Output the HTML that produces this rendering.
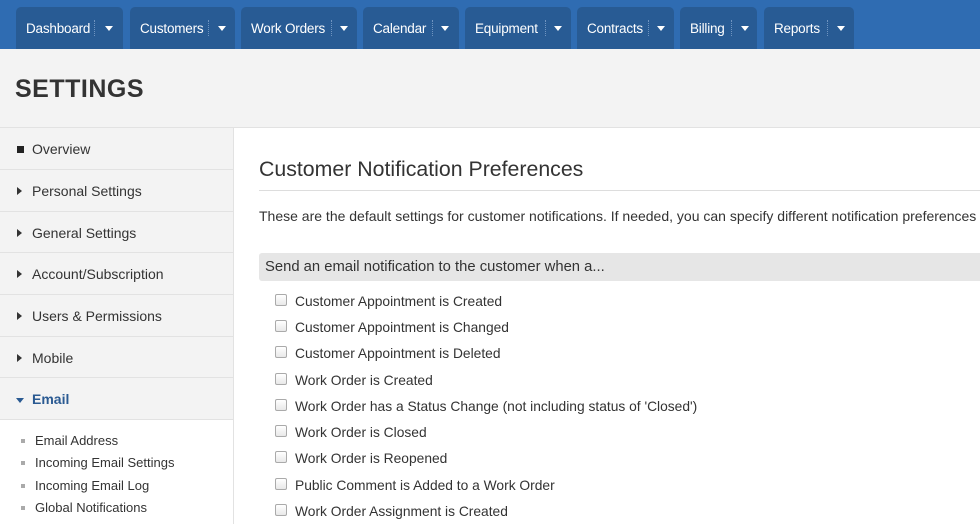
<!DOCTYPE html>
<html><head><style>
*{margin:0;padding:0;box-sizing:border-box}
body{width:980px;height:524px;overflow:hidden;font-family:"Liberation Sans",sans-serif;color:#333;background:#fff;position:relative}
.nav{position:absolute;left:0;top:0;width:980px;height:49px;background:#2f6cb2}
.tab{position:absolute;top:7px;height:42px;background:#285b94;border-radius:5px 5px 0 0;color:#fff;font-size:13.5px;line-height:43px;padding-left:10px;letter-spacing:-0.2px}
.tab .sep{position:absolute;top:13px;width:0;height:16px;border-left:1px dotted #6f94c0}
.tab .car{position:absolute;top:19px;width:0;height:0;border-left:4px solid transparent;border-right:4px solid transparent;border-top:5px solid #fff}
.hdr{position:absolute;left:0;top:49px;width:980px;height:79px;background:#f3f3f3;border-bottom:1px solid #e2e2e2}
.hdr h1{position:absolute;left:15px;top:26px;font-size:25px;font-weight:bold;color:#333;letter-spacing:0.5px}
.side{position:absolute;left:0;top:128px;width:234px;height:396px;background:#fff;border-right:1px solid #e2e2e2}
.si{position:absolute;left:0;width:233px;background:#f3f3f3;border-bottom:1px solid #e2e2e2;font-size:14px;padding-left:32px;padding-top:13px}
.si .ar{position:absolute;left:17px;top:17px;width:0;height:0;border-top:4px solid transparent;border-bottom:4px solid transparent;border-left:5px solid #333}
.sub{position:absolute;left:35px;font-size:13px;color:#333}
.sub:before{content:"";position:absolute;left:-14px;top:6px;width:4px;height:4px;background:#aaa}
.main h2{position:absolute;left:259px;top:157px;font-size:21.3px;font-weight:normal;color:#333}
.line{position:absolute;left:259px;top:190px;width:721px;height:1px;background:#ddd}
.p{position:absolute;left:259px;top:208px;font-size:14px;white-space:nowrap}
.bar{position:absolute;left:259px;top:253px;width:721px;height:28px;background:#e6e6e6;font-size:14.8px;line-height:28px;padding-left:6px;border-radius:3px 0 0 3px}
.cb{position:absolute;left:275px;width:12px;height:12px;border:1px solid #aaa;border-radius:2px;background:linear-gradient(#fff,#e8e8e8)}
.cl{position:absolute;left:295px;font-size:13.8px;white-space:nowrap}
</style></head><body>
<div class="nav">
<div class="tab" style="left:16px;width:107px">Dashboard<span class="sep" style="left:78px"></span><span class="car" style="left:89px"></span></div>
<div class="tab" style="left:130px;width:105px">Customers<span class="sep" style="left:78px"></span><span class="car" style="left:88px"></span></div>
<div class="tab" style="left:241px;width:116px">Work Orders<span class="sep" style="left:90px"></span><span class="car" style="left:99px"></span></div>
<div class="tab" style="left:363px;width:96px">Calendar<span class="sep" style="left:69px"></span><span class="car" style="left:78px"></span></div>
<div class="tab" style="left:465px;width:106px">Equipment<span class="sep" style="left:80px"></span><span class="car" style="left:89px"></span></div>
<div class="tab" style="left:577px;width:97px">Contracts<span class="sep" style="left:71px"></span><span class="car" style="left:80px"></span></div>
<div class="tab" style="left:680px;width:77px">Billing<span class="sep" style="left:51px"></span><span class="car" style="left:61px"></span></div>
<div class="tab" style="left:764px;width:90px">Reports<span class="sep" style="left:63px"></span><span class="car" style="left:73px"></span></div>
</div>
<div class="hdr"><h1>SETTINGS</h1></div>
<div class="side">
<div class="si" style="top:0;height:42px"><span style="position:absolute;left:17px;top:18px;width:7px;height:7px;background:#222"></span>Overview</div>
<div class="si" style="top:42px;height:42px"><span class="ar"></span>Personal Settings</div>
<div class="si" style="top:84px;height:41px"><span class="ar"></span>General Settings</div>
<div class="si" style="top:125px;height:42px"><span class="ar"></span>Account/Subscription</div>
<div class="si" style="top:167px;height:42px"><span class="ar"></span>Users &amp; Permissions</div>
<div class="si" style="top:209px;height:41px"><span class="ar"></span>Mobile</div>
<div class="si" style="top:250px;height:42px;color:#2a5a92;font-weight:bold"><span style="position:absolute;left:16px;top:20px;border-left:4px solid transparent;border-right:4px solid transparent;border-top:5px solid #2a5a92"></span>Email</div>
<div class="sub" style="top:305px">Email Address</div>
<div class="sub" style="top:327px">Incoming Email Settings</div>
<div class="sub" style="top:350px">Incoming Email Log</div>
<div class="sub" style="top:372px">Global Notifications</div>
</div>
<div class="main">
<h2>Customer Notification Preferences</h2>
<div class="line"></div>
<div class="p">These are the default settings for customer notifications. If needed, you can specify different notification preferences for</div>
<div class="bar">Send an email notification to the customer when a...</div>
<div class="cb" style="top:294px"></div><div class="cl" style="top:294px">Customer Appointment is Created</div>
<div class="cb" style="top:320px"></div><div class="cl" style="top:320px">Customer Appointment is Changed</div>
<div class="cb" style="top:346px"></div><div class="cl" style="top:346px">Customer Appointment is Deleted</div>
<div class="cb" style="top:373px"></div><div class="cl" style="top:373px">Work Order is Created</div>
<div class="cb" style="top:399px"></div><div class="cl" style="top:399px">Work Order has a Status Change (not including status of 'Closed')</div>
<div class="cb" style="top:425px"></div><div class="cl" style="top:425px">Work Order is Closed</div>
<div class="cb" style="top:451px"></div><div class="cl" style="top:451px">Work Order is Reopened</div>
<div class="cb" style="top:478px"></div><div class="cl" style="top:478px">Public Comment is Added to a Work Order</div>
<div class="cb" style="top:504px"></div><div class="cl" style="top:504px">Work Order Assignment is Created</div>
</div>
</body></html>
